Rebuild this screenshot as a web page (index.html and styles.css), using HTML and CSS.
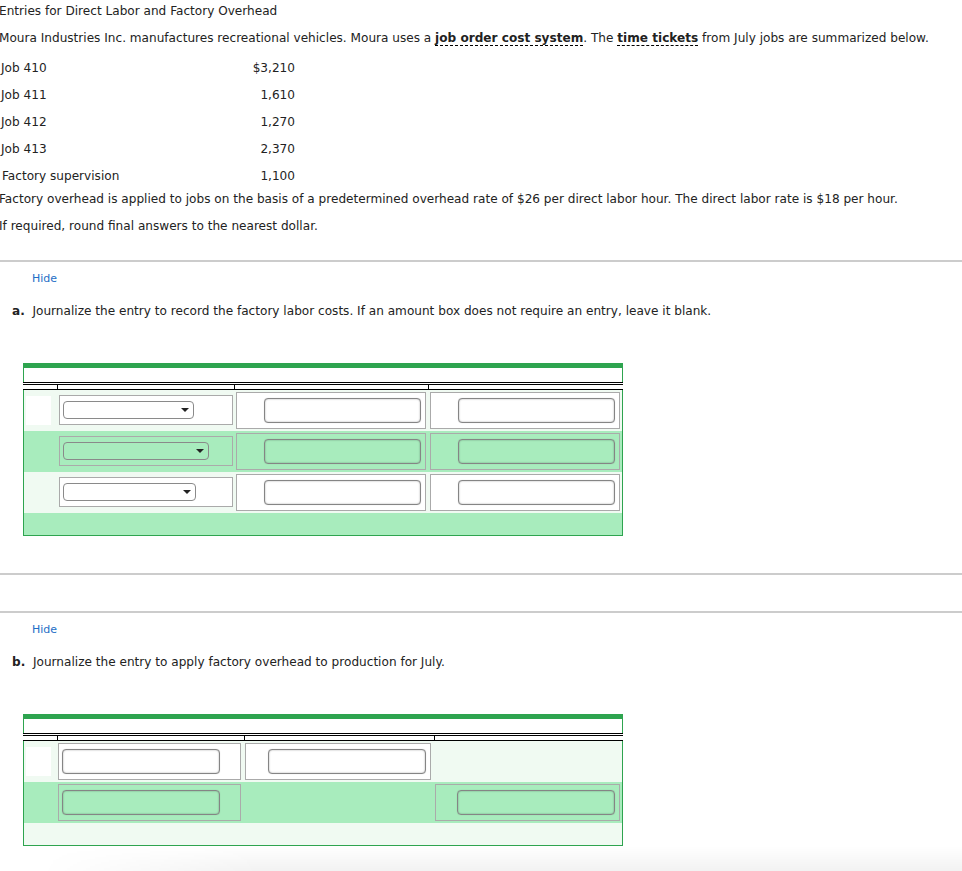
FILE: index.html
```html
<!DOCTYPE html>
<html lang="en">
<head>
<meta charset="utf-8">
<title>Entries for Direct Labor and Factory Overhead</title>
<link rel="stylesheet" href="styles.css">
</head>
<body>
<div class="question">
  <p class="title">Entries for Direct Labor and Factory Overhead</p>
  <p class="intro">Moura Industries Inc. manufactures recreational vehicles. Moura uses a <b class="term">job order cost system</b>. The <b class="term">time tickets</b> from July jobs are summarized below.</p>
  <div class="data">
    <span class="lbl">Job 410</span><span class="amt">$3,210</span>
    <span class="lbl">Job 411</span><span class="amt">1,610</span>
    <span class="lbl">Job 412</span><span class="amt">1,270</span>
    <span class="lbl">Job 413</span><span class="amt">2,370</span>
    <span class="lbl lbl-sup">Factory supervision</span><span class="amt">1,100</span>
  </div>
  <p class="note">Factory overhead is applied to jobs on the basis of a predetermined overhead rate of $26 per direct labor hour. The direct labor rate is $18 per hour.</p>
  <p class="note2">If required, round final answers to the nearest dollar.</p>
</div>

<hr class="rule rule-first">

<section class="part">
  <a class="hide">Hide</a>
  <p class="prompt"><b>a.</b>&nbsp; Journalize the entry to record the factory labor costs. If an amount box does not require an entry, leave it blank.</p>
  <div class="jt jt-a">
    <div class="jt-cap"></div>
    <div class="jt-head"><div></div><div></div><div></div><div></div></div>
    <div class="jt-row light">
      <div class="c1"><div class="blank"></div></div>
      <div class="c2"><div class="box"><div class="sel"><span class="arrow"></span></div></div></div>
      <div class="c3"><div class="box"><input class="amt-in" type="text"></div></div>
      <div class="c4"><div class="box"><input class="amt-in" type="text"></div></div>
    </div>
    <div class="jt-row green">
      <div class="c1"></div>
      <div class="c2"><div class="box"><div class="sel sel-wide"><span class="arrow"></span></div></div></div>
      <div class="c3"><div class="box"><input class="amt-in" type="text"></div></div>
      <div class="c4"><div class="box"><input class="amt-in" type="text"></div></div>
    </div>
    <div class="jt-row light">
      <div class="c1"></div>
      <div class="c2"><div class="box"><div class="sel sel-mid"><span class="arrow"></span></div></div></div>
      <div class="c3"><div class="box"><input class="amt-in" type="text"></div></div>
      <div class="c4"><div class="box"><input class="amt-in" type="text"></div></div>
    </div>
    <div class="jt-foot green"></div>
  </div>
</section>

<hr class="rule rule-mid">
<hr class="rule rule-second">

<section class="part">
  <a class="hide">Hide</a>
  <p class="prompt"><b>b.</b>&nbsp; Journalize the entry to apply factory overhead to production for July.</p>
  <div class="jt jt-b">
    <div class="jt-cap"></div>
    <div class="jt-head"><div></div><div></div><div></div><div></div></div>
    <div class="jt-row light">
      <div class="c1"><div class="blank"></div></div>
      <div class="c2"><div class="box"><input class="acct-in" type="text"></div></div>
      <div class="c3"><div class="box"><input class="amt-in" type="text"></div></div>
      <div class="c4"></div>
    </div>
    <div class="jt-row green">
      <div class="c1"></div>
      <div class="c2"><div class="box"><input class="acct-in" type="text"></div></div>
      <div class="c3"></div>
      <div class="c4"><div class="box"><input class="amt-in" type="text"></div></div>
    </div>
    <div class="jt-foot light"></div>
  </div>
  <div class="shade"></div>
</section>
</body>
</html>
```

FILE: styles.css
```css
html, body {
  margin: 0;
  padding: 0;
  background: #fff;
}
body {
  font-family: "DejaVu Sans", Verdana, sans-serif;
  font-size: 12.1px;
  line-height: 16px;
  color: #222;
  width: 962px;
  overflow: hidden;
}
p { margin: 0; }

.question {
  margin-left: -1px;
}
.title {
  padding-top: 3px;
}
.intro {
  margin-top: 11px;
  white-space: nowrap;
}
.term {
  font-weight: bold;
  border-bottom: 1px dashed #000;
}
.data {
  margin-top: 8px;
  display: grid;
  grid-template-columns: 230px 64px;
  grid-auto-rows: 27px;
  align-items: center;
  padding-left: 2px;
}
.lbl-sup { margin-left: 1px; }
.amt { text-align: right; }
.note { margin-top: 2px; white-space: nowrap; }
.note2 { margin-top: 11px; }

.rule {
  border: 0;
  height: 2px;
  background: #cccccc;
  margin: 0;
}
.rule-first { margin-top: 26px; }
.rule-mid { margin-top: 37px; }
.rule-second { margin-top: 36px; }

.hide {
  display: block;
  margin: 10px 0 0 32px;
  font-size: 11px;
  line-height: 14px;
  color: #1f6ec6;
  cursor: pointer;
}
.prompt {
  margin: 17px 0 0 12px;
  white-space: nowrap;
}
.prompt b { font-weight: bold; }

/* journal table */
.jt {
  margin: 44px 0 0 23px;
  width: 600px;
  box-sizing: border-box;
  border: 1px solid #2ea44f;
  border-top: 5px solid #2ea44f;
}
.jt-cap {
  height: 14px;
  background: #fff;
}
.jt-head {
  display: grid;
  height: 4px;
  border-top: 3px double #000;
  border-bottom: 1px solid #000;
  margin: 0 -1px;
  background: #fff;
}
.jt-head > div + div {
  border-left: 1px solid #000;
}
.jt-row {
  display: grid;
  height: 41px;
}
.jt-foot { height: 22px; }
.light { background: #f0faf2; }
.green { background: #a8ecbd; }

.jt-a .jt-head { grid-template-columns: 34px 177px 194px 195px; }
.jt-a .jt-row { grid-template-columns: 33px 177px 194px 194px; }
.jt-b .jt-head { grid-template-columns: 34px 187px 190px 189px; }
.jt-b .jt-row { grid-template-columns: 33px 187px 190px 188px; }

.blank {
  width: 25px;
  height: 29px;
  margin: 6px 0 0 2px;
  background: #fff;
}
.box {
  box-sizing: border-box;
  border: 1px solid #aaaaaa;
  display: flex;
}
.light .box { background: #fff; }

.jt-a .c2 .box {
  width: 174px;
  height: 30px;
  margin: 5px 0 0 2px;
  padding: 5px 0 0 3px;
}
.jt-a .c3 .box,
.jt-a .c4 .box {
  width: 190px;
  height: 37px;
  margin: 2px 0 0 2px;
  padding: 5px 4px 0 0;
  justify-content: flex-end;
}
.jt-b .box {
  height: 37px;
  margin: 2px 0 0 1px;
  padding: 5px 4px 0 3px;
}
.jt-b .c2 .box { width: 183px; }
.jt-b .c3 .box { width: 186px; justify-content: flex-end; }
.jt-b .c4 .box { width: 185px; justify-content: flex-end; }

.sel {
  box-sizing: border-box;
  width: 131px;
  height: 18px;
  border: 1px solid #8a8a8a;
  border-radius: 4px;
  display: flex;
  align-items: center;
  justify-content: flex-end;
  padding-right: 4px;
}
.light .sel { background: #fff; }
.sel-wide { width: 146px; }
.sel-mid { width: 133px; }
.arrow {
  width: 0;
  height: 0;
  border-left: 4px solid transparent;
  border-right: 4px solid transparent;
  border-top: 4px solid #222;
}

.amt-in, .acct-in {
  box-sizing: border-box;
  width: 157px;
  height: 25px;
  margin: 0;
  padding: 0 4px;
  border: 1px solid #858585;
  border-radius: 4px;
  box-shadow: inset 0 0 2px rgba(0, 0, 0, 0.35), 0 0 1px rgba(0, 0, 0, 0.2);
  background: transparent;
  font: inherit;
  outline: none;
}
.light .amt-in, .light .acct-in { background: #fff; }
.jt-b .amt-in, .jt-b .acct-in { width: 158px; }

.shade {
  height: 25px;
  background: linear-gradient(to bottom, rgba(0,0,0,0) 0%, rgba(0,0,0,0.05) 100%);
  -webkit-mask-image: linear-gradient(to right, transparent 40px, #000 260px);
  mask-image: linear-gradient(to right, transparent 40px, #000 260px);
}
```
